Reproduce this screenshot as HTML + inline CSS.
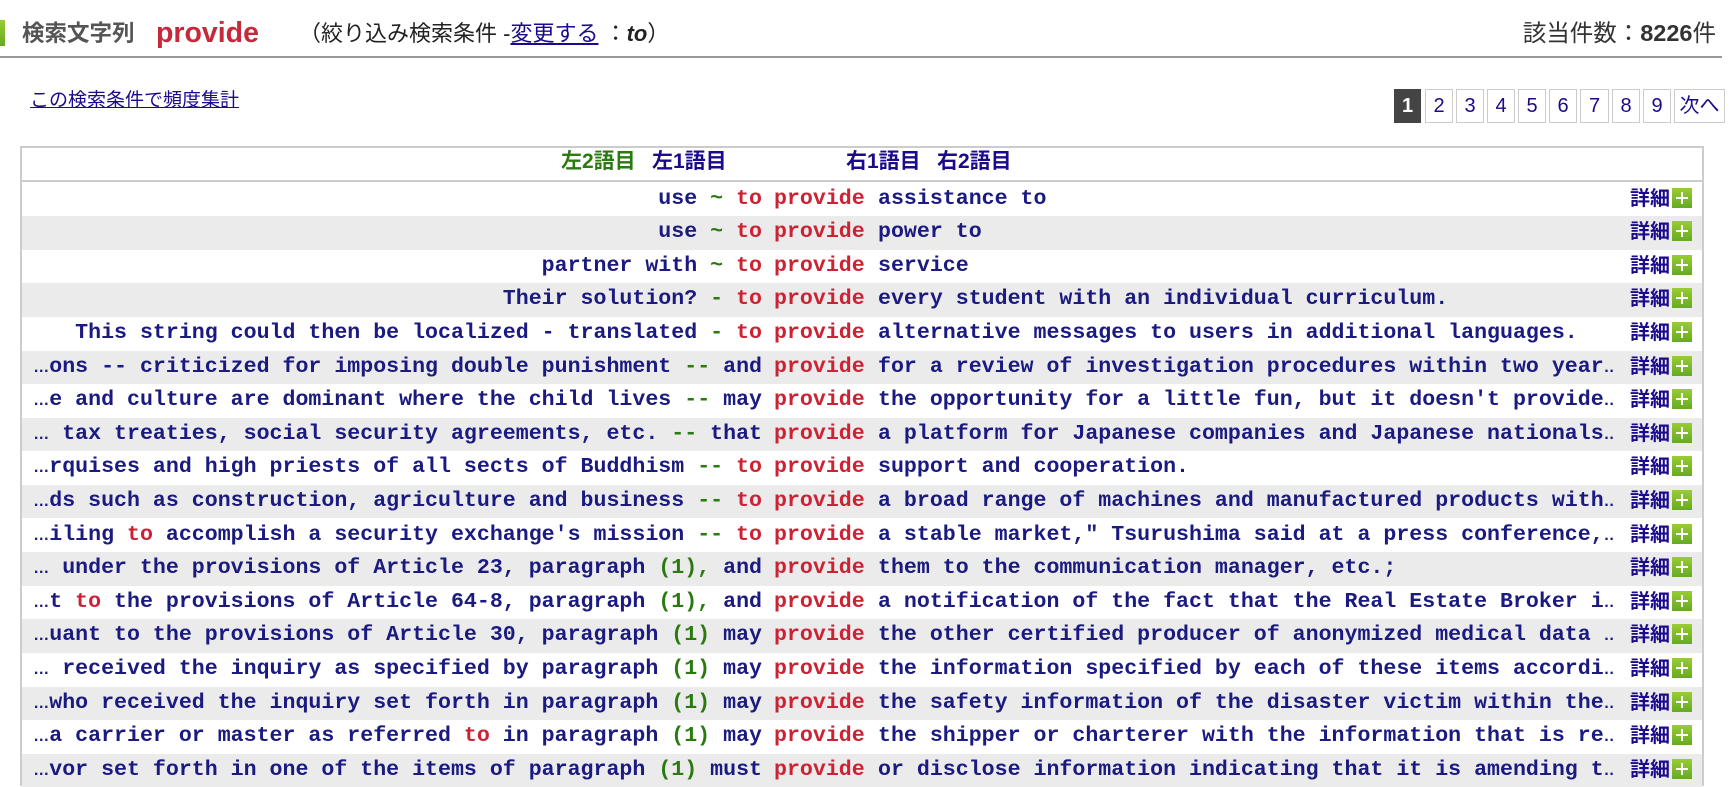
<!DOCTYPE html>
<html><head><meta charset="utf-8"><style>
*{margin:0;padding:0;box-sizing:border-box}
body{width:1736px;height:768px;overflow:hidden;background:#fff;font-family:"Liberation Sans","Noto Sans CJK JP",sans-serif;position:relative}
.a{position:absolute;white-space:nowrap}
.bar{left:0;top:20px;width:5px;height:26px;background:linear-gradient(#9c3,#6a2)}
.pg{position:absolute;top:89px;height:34px;border:1px solid #ccc;color:#1a0a8c;font-size:20px;text-align:center;line-height:32px}
.tbl{position:absolute;left:20px;top:146px;width:1684px;height:640px;border:2px solid #ccc}
.row{position:absolute;left:22px;width:1680px;height:33.6px}
.g{background:#ebebeb}
.m{font-family:"Liberation Mono",monospace;font-weight:bold;font-size:21.6px;color:#1a1a80;line-height:33.6px}
.L{position:absolute;right:940px;top:0;text-align:right}
.K{position:absolute;left:752px;top:0;color:#cc2233}
.R{position:absolute;left:856px;top:0;width:735px;overflow:hidden}
.gr{color:#2a7a10}.rd{color:#cc2233}
.el{font-family:"Liberation Sans",sans-serif;font-size:16px}
.d{position:absolute;left:1608px;top:0;font-size:20px;color:#1a0a8c;font-weight:bold;font-family:"Liberation Sans","Noto Sans CJK JP",sans-serif;line-height:33.6px}
.plus{display:inline-block;width:20px;height:20px;background:linear-gradient(#9c3,#6a2);vertical-align:-3px;margin-left:2px;position:relative}
.plus:before{content:"";position:absolute;left:4px;top:9px;width:12px;height:2px;background:#fff}
.plus:after{content:"";position:absolute;left:9px;top:4px;width:2px;height:12px;background:#fff}
.h{position:absolute;top:147px;font-size:21px;font-weight:bold;line-height:30px;white-space:nowrap}
</style></head><body>
<div class="a bar"></div>
<div class="a" style="left:22px;top:20px;font-size:22.5px;font-weight:bold;color:#555;line-height:28px">検索文字列</div>
<div class="a" style="left:156px;top:16px;font-size:28.5px;font-weight:bold;color:#c8283c;line-height:34px">provide</div>
<div class="a" style="left:299px;top:19px;font-size:22px;color:#222;line-height:30px">（絞り込み検索条件 -<span style="color:#1a0a8c;text-decoration:underline">変更する</span> ：<b><i>to</i></b>）</div>
<div class="a" style="right:20px;top:18px;font-size:23.5px;color:#333;line-height:30px">該当件数：<b>8226</b>件</div>
<div class="a" style="left:0;top:56px;width:1722px;height:2px;background:#999"></div>
<div class="a" style="left:30px;top:88px;font-size:19px;color:#1a0a8c;text-decoration:underline;line-height:26px">この検索条件で頻度集計</div>
<div class="pg" style="left:1394px;width:27px;background:#444;color:#fff;font-weight:bold;border-color:#444">1</div>
<div class="pg" style="left:1425px;width:28px">2</div>
<div class="pg" style="left:1456px;width:28px">3</div>
<div class="pg" style="left:1487px;width:28px">4</div>
<div class="pg" style="left:1518px;width:28px">5</div>
<div class="pg" style="left:1549px;width:28px">6</div>
<div class="pg" style="left:1580px;width:29px">7</div>
<div class="pg" style="left:1612px;width:28px">8</div>
<div class="pg" style="left:1643px;width:28px">9</div>
<div class="pg" style="left:1674px;width:51px">次へ</div>
<div class="tbl"></div>
<div class="a" style="left:22px;top:180px;width:1680px;height:2px;background:#ccc"></div>
<div class="h" style="left:561px;color:#2a7a10">左2語目</div>
<div class="h" style="left:652px;color:#1a0a8c">左1語目</div>
<div class="h" style="left:846px;color:#1a0a8c">右1語目</div>
<div class="h" style="left:937px;color:#1a0a8c">右2語目</div>

<div class="row m" style="top:182.5px"><span class="L a">use <span class="gr">~</span> <span class="rd">to</span></span><span class="K a">provide</span><span class="R a">assistance to</span><span class="d">詳細<span class="plus"></span></span></div>
<div class="row m g" style="top:216.1px"><span class="L a">use <span class="gr">~</span> <span class="rd">to</span></span><span class="K a">provide</span><span class="R a">power to</span><span class="d">詳細<span class="plus"></span></span></div>
<div class="row m" style="top:249.7px"><span class="L a">partner with <span class="gr">~</span> <span class="rd">to</span></span><span class="K a">provide</span><span class="R a">service</span><span class="d">詳細<span class="plus"></span></span></div>
<div class="row m g" style="top:283.3px"><span class="L a">Their solution? <span class="gr">-</span> <span class="rd">to</span></span><span class="K a">provide</span><span class="R a">every student with an individual curriculum.</span><span class="d">詳細<span class="plus"></span></span></div>
<div class="row m" style="top:316.9px"><span class="L a">This string could then be localized - translated <span class="gr">-</span> <span class="rd">to</span></span><span class="K a">provide</span><span class="R a">alternative messages to users in additional languages.</span><span class="d">詳細<span class="plus"></span></span></div>
<div class="row m g" style="top:350.5px"><span class="L a"><span class="el">…</span>ons -- criticized for imposing double punishment <span class="gr">--</span> and</span><span class="K a">provide</span><span class="R a">for a review of investigation procedures within two year<span class="el">…</span></span><span class="d">詳細<span class="plus"></span></span></div>
<div class="row m" style="top:384.1px"><span class="L a"><span class="el">…</span>e and culture are dominant where the child lives <span class="gr">--</span> may</span><span class="K a">provide</span><span class="R a">the opportunity for a little fun, but it doesn't provide<span class="el">…</span></span><span class="d">詳細<span class="plus"></span></span></div>
<div class="row m g" style="top:417.7px"><span class="L a"><span class="el">…</span> tax treaties, social security agreements, etc. <span class="gr">--</span> that</span><span class="K a">provide</span><span class="R a">a platform for Japanese companies and Japanese nationals<span class="el">…</span></span><span class="d">詳細<span class="plus"></span></span></div>
<div class="row m" style="top:451.3px"><span class="L a"><span class="el">…</span>rquises and high priests of all sects of Buddhism <span class="gr">--</span> <span class="rd">to</span></span><span class="K a">provide</span><span class="R a">support and cooperation.</span><span class="d">詳細<span class="plus"></span></span></div>
<div class="row m g" style="top:484.9px"><span class="L a"><span class="el">…</span>ds such as construction, agriculture and business <span class="gr">--</span> <span class="rd">to</span></span><span class="K a">provide</span><span class="R a">a broad range of machines and manufactured products with<span class="el">…</span></span><span class="d">詳細<span class="plus"></span></span></div>
<div class="row m" style="top:518.5px"><span class="L a"><span class="el">…</span>iling <span class="rd">to</span> accomplish a security exchange's mission <span class="gr">--</span> <span class="rd">to</span></span><span class="K a">provide</span><span class="R a">a stable market," Tsurushima said at a press conference,<span class="el">…</span></span><span class="d">詳細<span class="plus"></span></span></div>
<div class="row m g" style="top:552.1px"><span class="L a"><span class="el">…</span> under the provisions of Article 23, paragraph <span class="gr">(1),</span> and</span><span class="K a">provide</span><span class="R a">them to the communication manager, etc.;</span><span class="d">詳細<span class="plus"></span></span></div>
<div class="row m" style="top:585.7px"><span class="L a"><span class="el">…</span>t <span class="rd">to</span> the provisions of Article 64-8, paragraph <span class="gr">(1),</span> and</span><span class="K a">provide</span><span class="R a">a notification of the fact that the Real Estate Broker i<span class="el">…</span></span><span class="d">詳細<span class="plus"></span></span></div>
<div class="row m g" style="top:619.3px"><span class="L a"><span class="el">…</span>uant to the provisions of Article 30, paragraph <span class="gr">(1)</span> may</span><span class="K a">provide</span><span class="R a">the other certified producer of anonymized medical data <span class="el">…</span></span><span class="d">詳細<span class="plus"></span></span></div>
<div class="row m" style="top:652.9px"><span class="L a"><span class="el">…</span> received the inquiry as specified by paragraph <span class="gr">(1)</span> may</span><span class="K a">provide</span><span class="R a">the information specified by each of these items accordi<span class="el">…</span></span><span class="d">詳細<span class="plus"></span></span></div>
<div class="row m g" style="top:686.5px"><span class="L a"><span class="el">…</span>who received the inquiry set forth in paragraph <span class="gr">(1)</span> may</span><span class="K a">provide</span><span class="R a">the safety information of the disaster victim within the<span class="el">…</span></span><span class="d">詳細<span class="plus"></span></span></div>
<div class="row m" style="top:720.1px"><span class="L a"><span class="el">…</span>a carrier or master as referred <span class="rd">to</span> in paragraph <span class="gr">(1)</span> may</span><span class="K a">provide</span><span class="R a">the shipper or charterer with the information that is re<span class="el">…</span></span><span class="d">詳細<span class="plus"></span></span></div>
<div class="row m g" style="top:753.7px"><span class="L a"><span class="el">…</span>vor set forth in one of the items of paragraph <span class="gr">(1)</span> must</span><span class="K a">provide</span><span class="R a">or disclose information indicating that it is amending t<span class="el">…</span></span><span class="d">詳細<span class="plus"></span></span></div>
</body></html>
